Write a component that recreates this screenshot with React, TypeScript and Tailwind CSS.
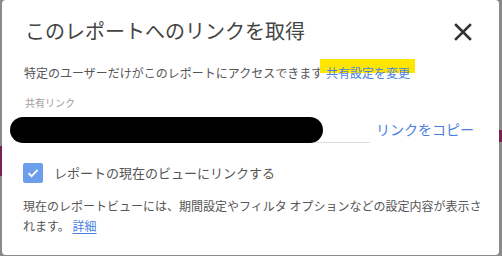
import React from "react";

export default function App() {
  const font = { fontFamily: '"Noto Sans CJK JP", "Noto Sans", sans-serif' };
  return (
    <div className="relative w-[502px] h-[256px] bg-[#8a8a8a] overflow-hidden" style={font}>
      <div className="absolute left-0 top-[146px] w-[2px] h-[30px] bg-[#7a1f4e]" />
      <div className="absolute right-0 top-[130px] w-[3px] h-[12px] bg-[#7a1f4e]" />
      <div className="relative ml-[2px] w-[497px] h-[255px] bg-white rounded-[4px] flex flex-col pl-[21px] pr-[27px]">
        <div className="flex items-center justify-between pt-[17px] h-[45px]">
          <div className="text-[20px] leading-[28px] text-[#444] pl-[2px]">このレポートへのリンクを取得</div>
          <svg width="18" height="18" viewBox="0 0 18 18" className="mt-[1px]">
            <path d="M2 2 L16 16 M16 2 L2 16" stroke="#333" strokeWidth="2.6" strokeLinecap="square" />
          </svg>
        </div>
        <div className="mt-[20px] text-[12px] leading-[16px] text-[#555] pl-[1px] whitespace-nowrap">
          特定のユーザーだけがこのレポートにアクセスできます{" "}
          <span className="relative">
            <span className="absolute left-[-6px] right-[-5px] top-[-5px] h-[14px] bg-[#ffe600]" />
            <span className="relative text-[#4a7fe0]">共有設定を変更</span>
          </span>
        </div>
        <div className="mt-[16px] text-[10px] leading-[12px] text-[#9e9e9e] pl-[2px]">共有リンク</div>
        <div className="mt-[6px] flex items-center whitespace-nowrap">
          <div className="relative shrink-0 w-[345px] h-[28px] ml-[2px] border-b border-[#dcdcdc]">
            <div className="absolute left-[-15px] top-[2px] w-[313px] h-[26px] bg-black rounded-full" />
          </div>
          <div className="ml-[6px] shrink-0 text-[14px] leading-[20px] text-[#4a7fe0]">リンクをコピー</div>
        </div>
        <div className="mt-[20px] flex items-center h-[20px]">
          <div className="w-[20px] h-[20px] rounded-[2px] bg-[#6d9eeb] flex items-center justify-center">
            <svg width="14" height="14" viewBox="0 0 14 14">
              <path d="M2.5 7.2 L5.6 10.2 L11.6 3.8" stroke="white" strokeWidth="1.8" fill="none" />
            </svg>
          </div>
          <div className="ml-[11px] text-[13px] leading-[20px] text-[#555]">レポートの現在のビューにリンクする</div>
        </div>
        <div className="mt-[13px] text-[12px] leading-[20px] text-[#555] whitespace-nowrap">
          現在のレポートビューには、期間設定やフィルタ オプションなどの設定内容が表示さ
          <br />
          れます。 <span className="text-[#4a7fe0] underline underline-offset-2">詳細</span>
        </div>
      </div>
    </div>
  );
}
